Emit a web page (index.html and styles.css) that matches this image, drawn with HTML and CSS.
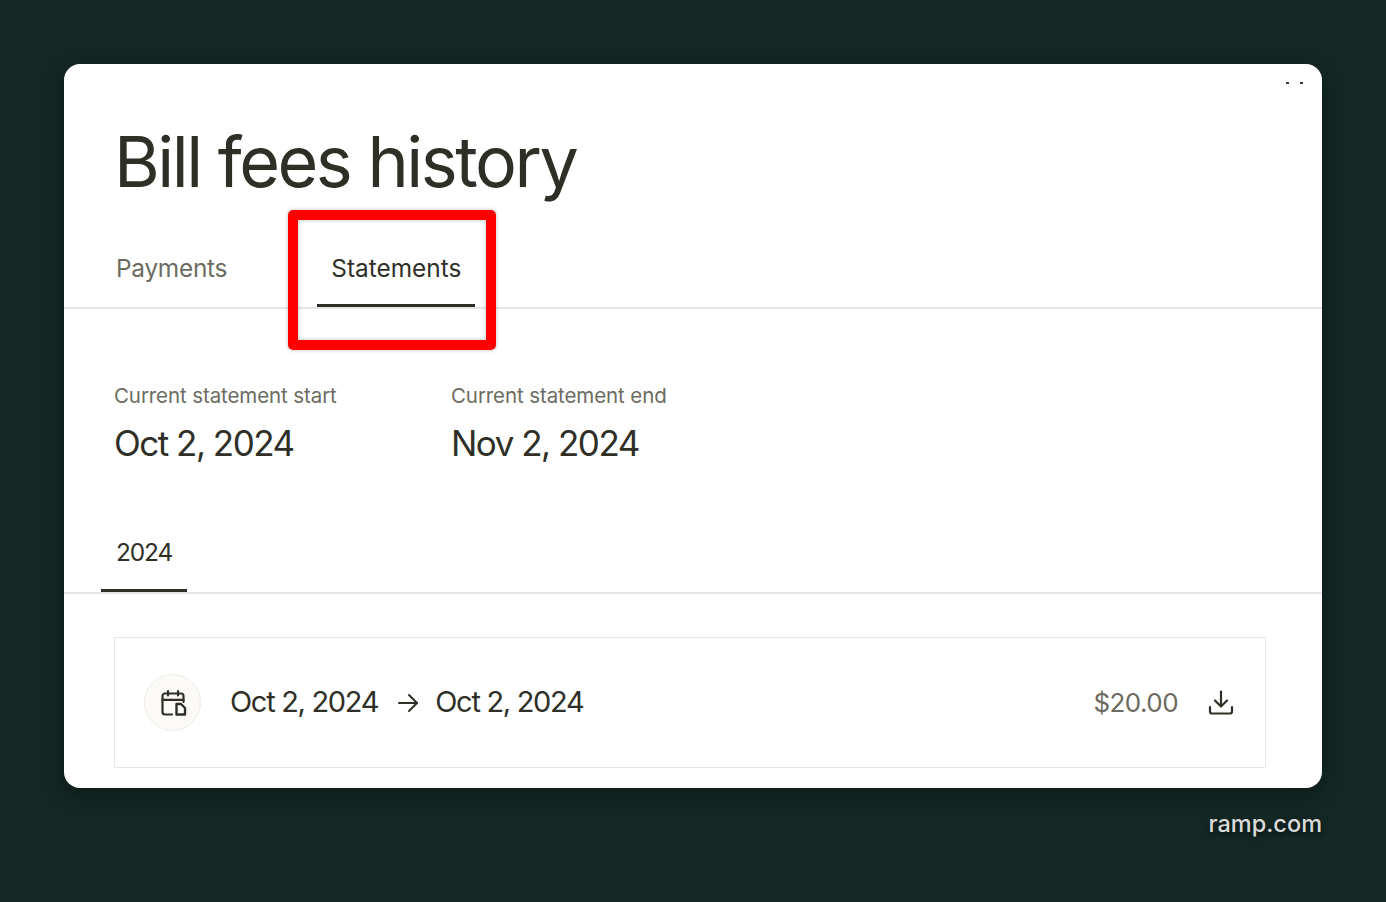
FILE: index.html
```html
<!DOCTYPE html>
<html lang="en">
  <head>
    <meta charset="UTF-8" />
    <meta name="viewport" content="width=device-width, initial-scale=1.0" />
    <title>Bill fees history</title>
    <link rel="stylesheet" href="styles.css">
  </head>
  <body>
    <div class="modal">
      <div class="close-marks"><span></span><span></span></div>
      <h1>Bill fees history</h1>

      <div class="tabs main-tabs">
        <div class="tab payments">Payments</div>
        <div class="tab active">Statements</div>
      </div>
      <div class="highlight"></div>

      <div class="summary">
        <div class="summary-item">
          <div class="summary-label">Current statement start</div>
          <div class="summary-value">Oct 2, 2024</div>
        </div>
        <div class="summary-item">
          <div class="summary-label">Current statement end</div>
          <div class="summary-value">Nov 2, 2024</div>
        </div>
      </div>

      <div class="tabs year-tabs">
        <div class="tab active">2024</div>
      </div>

      <div class="statement">
        <div class="statement-icon">
          <svg width="28" height="28" viewBox="0 0 28 28" fill="none" stroke="#2f2f27" stroke-width="2.200" stroke-linecap="round" stroke-linejoin="round">
            <path d="M13 25.500H6A2.500 2.500 0 0 1 3.500 23V7A2.500 2.500 0 0 1 6 4.500H22A2.500 2.500 0 0 1 24.500 7V13"/>
            <path d="M3.500 10.800H24.500"/>
            <path d="M9 2V6.500"/>
            <path d="M19 2V6.500"/>
            <path d="M17.500 15H22L26 19V25.500H17.500Z" fill="#fff" stroke-width="2.400"/>
          </svg>
        </div>
        <div class="statement-dates">
          <span>Oct 2, 2024</span>
          <svg class="arrow" width="24" height="24" viewBox="0 0 24 24" fill="none" stroke="#2f2f27" stroke-width="2" stroke-linecap="round" stroke-linejoin="round">
            <path d="M3 12H21"/>
            <path d="M13 4L21 12L13 20"/>
          </svg>
          <span>Oct 2, 2024</span>
        </div>
        <div class="statement-amount">$20.00</div>
        <svg class="download" width="28" height="28" viewBox="0 0 28 28" fill="none" stroke="#2f2f27" stroke-width="2.200" stroke-linecap="round" stroke-linejoin="round">
          <path d="M14 2.500V17"/>
          <path d="M8 11.500L14 17.500L20 11.500"/>
          <path d="M3 18V22.500A2 2 0 0 0 5 24.500H23A2 2 0 0 0 25 22.500V18"/>
        </svg>
      </div>
    </div>
    <div class="watermark">ramp.com</div>
  </body>
</html>
```

FILE: styles.css
```css
html,
body {
  height: 100%;
}
body {
  font-family: Inter, "Liberation Sans", sans-serif;
  background-color: #132724;
  color: #2f2f27;
  margin: 0;
  padding: 64px 64px 0;
  box-sizing: border-box;
  overflow: hidden;
}
.modal {
  position: relative;
  height: 724px;
  background-color: #fff;
  border-radius: 16px;
  box-shadow: 0 6px 20px rgba(0, 0, 0, 0.3);
  overflow: hidden;
}
.close-marks {
  position: absolute;
  top: 18px;
  right: 19px;
  display: flex;
  gap: 11px;
}
.close-marks span {
  width: 3px;
  height: 2px;
  background-color: #3a3a32;
}
h1 {
  margin: 0;
  padding: 60px 0 0 50px;
  font-size: 70px;
  font-weight: 440;
  line-height: 76px;
  letter-spacing: -2.500px;
}
.tabs {
  display: flex;
  border-bottom: 2px solid #e6e6e4;
}
.main-tabs {
  margin-top: 54px;
  padding-left: 37px;
  gap: 75px;
}
.year-tabs {
  margin-top: 73px;
  padding-left: 37px;
}
.main-tabs .tab {
  height: 53px;
}
.tab {
  position: relative;
  padding: 0 15px;
  font-size: 24.400px;
  line-height: 28px;
  height: 54px;
  box-sizing: border-box;
}
.main-tabs .tab.active {
  padding: 0 14px;
}
.year-tabs .tab {
  letter-spacing: -1.100px;
}
.tab.payments {
  color: #6b6c5f;
  letter-spacing: -0.250px;
}
.tab.active::after {
  content: "";
  position: absolute;
  left: 0;
  right: 0;
  bottom: 0;
  height: 3px;
  background-color: #2f2f27;
}
.highlight {
  position: absolute;
  left: 224px;
  top: 146px;
  width: 188px;
  height: 120px;
  border: 10px solid #ff0000;
  border-radius: 5px;
  box-shadow: 0 0 4px rgba(0, 0, 0, 0.25), inset 0 0 4px rgba(0, 0, 0, 0.25);
}
.summary {
  display: flex;
  padding: 72px 0 0 50px;
}
.summary-item {
  width: 337px;
}
.summary-label {
  font-size: 20.500px;
  line-height: 30px;
  color: #6b6c5f;
  letter-spacing: -0.1px;
}
.summary-value {
  margin-top: 10px;
  font-size: 35px;
  line-height: 44px;
  letter-spacing: -1.500px;
}
.statement {
  display: flex;
  align-items: center;
  height: 129px;
  margin: 43px 56px 0 50px;
  padding: 0 30px 0 29px;
  border: 1px solid #e6e6e4;
}
.statement-icon {
  display: flex;
  align-items: center;
  justify-content: center;
  width: 55px;
  height: 55px;
  border: 1px solid #eeece6;
  border-radius: 50%;
  background-color: #fbfaf7;
}
.statement-dates {
  display: flex;
  align-items: center;
  gap: 18px;
  margin-left: 29px;
  font-size: 29px;
  line-height: 34px;
  letter-spacing: -1.300px;
}
.statement-dates span {
  margin-bottom: 2px;
}
.arrow {
  margin-right: -3px;
}
.statement-amount {
  margin-left: auto;
  font-size: 26px;
  letter-spacing: -0.550px;
  color: #6b6c5f;
}
.download {
  margin-left: 29px;
}
.watermark {
  margin-top: 21px;
  text-align: right;
  font-size: 23.500px;
  font-weight: 500;
  line-height: 30px;
  color: #d9dbd9;
  text-shadow: 0 2px 4px rgba(0, 0, 0, 0.6);
}
```
